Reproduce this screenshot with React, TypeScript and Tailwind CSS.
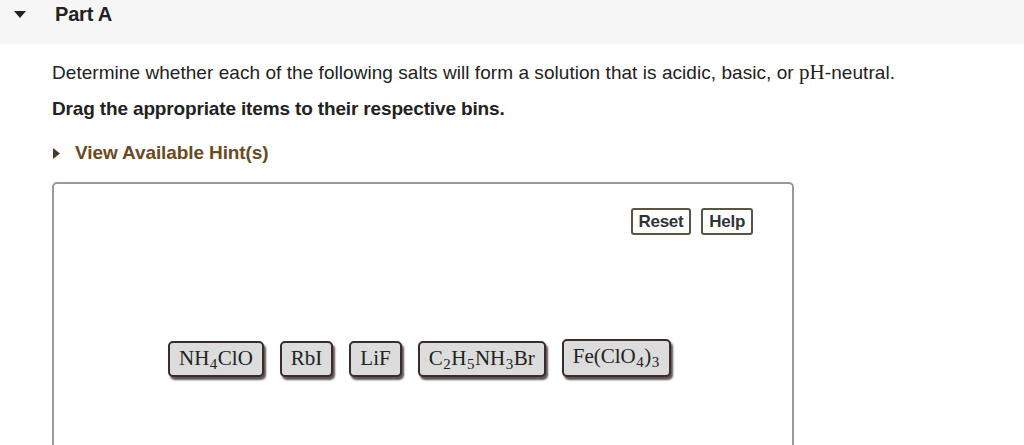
import React from 'react'

function Sub({ children }: { children: React.ReactNode }) {
  return <span className="relative top-[4px] text-[15px] leading-none px-[0.5px]">{children}</span>
}

const chips: { key: string; node: React.ReactNode; tall?: boolean }[] = [
  { key: 'nh4clo', node: <>NH<Sub>4</Sub>ClO</> },
  { key: 'rbi', node: <>RbI</> },
  { key: 'lif', node: <>LiF</> },
  {
    key: 'c2h5',
    node: (
      <>
        C<Sub>2</Sub>H<Sub>5</Sub>NH<Sub>3</Sub>Br
      </>
    ),
  },
  {
    key: 'fe',
    node: (
      <>
        Fe(ClO<Sub>4</Sub>)<Sub>3</Sub>
      </>
    ),
    tall: true,
  },
]

export default function App() {
  return (
    <div className="w-[1024px] h-[445px] overflow-hidden bg-white font-['Liberation_Sans',Arial,sans-serif] text-[#222]">
      {/* Part header */}
      <div className="h-[44px] bg-[#f6f6f6] flex items-start pt-[3px]">
        <svg width="12" height="8" viewBox="0 0 12 8" className="ml-[14px] mt-[8px]">
          <polygon points="0,0 12,0 6,7" fill="#222" />
        </svg>
        <span className="ml-[29px] text-[20px] font-bold leading-[22px] tracking-[-0.2px]">Part A</span>
      </div>

      <div className="pl-[52px]">
        <p className="mt-[17px] text-[19px] leading-[22px] tracking-[0.05px]">
          Determine whether each of the following salts will form a solution that is acidic, basic, or{' '}
          <span className="font-['Liberation_Serif',serif] text-[21px]">pH</span>-neutral.
        </p>
        <p className="mt-[14px] text-[19px] leading-[22px] font-bold tracking-[-0.15px]">
          Drag the appropriate items to their respective bins.
        </p>

        <div className="mt-[22px] flex items-center text-[#6b4a22]">
          <svg width="7" height="11" viewBox="0 0 7 11" className="ml-[1px]">
            <polygon points="0,0 7,5.5 0,11" fill="#4a3a2a" />
          </svg>
          <span className="ml-[15px] text-[19px] leading-[22px] font-bold tracking-[-0.1px]">View Available Hint(s)</span>
        </div>

        {/* Drag area */}
        <div className="mt-[18px] w-[742px] h-[300px] border-2 border-[#999] rounded-[5px] relative">
          <div className="flex justify-end gap-[10px] pr-[39px] pt-[24px]">
            <button className="h-[27px] px-[6px] border-2 border-[#5a5346] rounded-[3px] text-[17px] font-bold text-[#333] leading-none tracking-[-0.3px]">
              Reset
            </button>
            <button className="h-[27px] px-[6px] border-2 border-[#5a5346] rounded-[3px] text-[17px] font-bold text-[#333] leading-none tracking-[-0.3px]">
              Help
            </button>
          </div>

          <div className="flex items-start gap-[16px] pl-[114px] mt-[106px]">
            {chips.map((c) => (
              <div
                key={c.key}
                className={
                  c.tall
                    ? 'h-[38px] -mt-[2px] px-[9px] pb-[3px] border-2 border-[#3b2c2c] rounded-[5px] bg-[#dcdcdc] shadow-[2px_3px_2px_rgba(40,25,25,0.75)] flex items-center font-["Liberation_Serif",serif] text-[21px] text-[#222]'
                    : 'h-[36px] px-[9px] pb-[1px] border-2 border-[#3b2c2c] rounded-[5px] bg-[#dcdcdc] shadow-[2px_3px_2px_rgba(40,25,25,0.75)] flex items-center font-["Liberation_Serif",serif] text-[21px] text-[#222]'
                }
              >
                <span className="leading-none whitespace-nowrap">{c.node}</span>
              </div>
            ))}
          </div>
        </div>
      </div>
    </div>
  )
}
